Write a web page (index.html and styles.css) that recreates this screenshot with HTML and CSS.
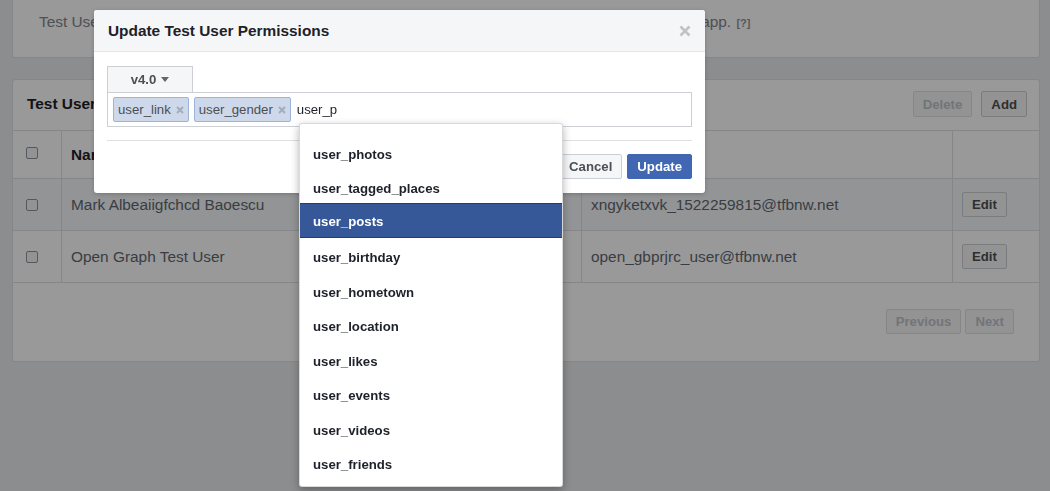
FILE: index.html
```html
<!DOCTYPE html>
<html lang="en">
<head>
<meta charset="utf-8">
<title>Test Users</title>
<link rel="stylesheet" href="styles.css">
</head>
<body>
<div class="page">
  <section class="card intro">
    <p class="intro-text">Test Users are special test accounts that are invisible to real people and can be used to test your app. <span class="help">[?]</span></p>
  </section>

  <section class="card users">
    <header class="users-head">
      <h2 class="users-title">Test Users</h2>
      <div class="users-actions">
        <button class="btn btn-tall btn-disabled">Delete</button>
        <button class="btn btn-tall">Add</button>
      </div>
    </header>
    <div class="grid">
      <div class="row row-head">
        <div class="cell cell-check"><span class="check"></span></div>
        <div class="cell">Name</div>
        <div class="cell">Email</div>
        <div class="cell"></div>
      </div>
      <div class="row row-alt">
        <div class="cell cell-check"><span class="check"></span></div>
        <div class="cell">Mark Albeaiigfchcd Baoescu</div>
        <div class="cell">xngyketxvk_1522259815@tfbnw.net</div>
        <div class="cell"><button class="btn">Edit</button></div>
      </div>
      <div class="row">
        <div class="cell cell-check"><span class="check"></span></div>
        <div class="cell">Open Graph Test User</div>
        <div class="cell">open_gbprjrc_user@tfbnw.net</div>
        <div class="cell"><button class="btn">Edit</button></div>
      </div>
    </div>
    <div class="pager">
      <button class="btn btn-disabled">Previous</button>
      <button class="btn btn-disabled">Next</button>
    </div>
  </section>
</div>

<div class="overlay"></div>

<div class="dialog">
  <div class="dialog-head">
    <h3 class="dialog-title">Update Test User Permissions</h3>
    <svg class="close" width="12" height="12" viewBox="0 0 12 12"><path d="M1.5 1.5L10.5 10.5M10.5 1.5L1.5 10.5" stroke="#bec2c9" stroke-width="2.6" stroke-linecap="butt"/></svg>
  </div>
  <div class="dialog-body">
    <div class="version">v4.0<span class="caret"></span></div>
    <div class="tokens">
      <span class="token">user_link<svg class="token-x" width="8" height="8" viewBox="0 0 8 8"><path d="M1 1L7 7M7 1L1 7" stroke="#a3acbb" stroke-width="2"/></svg></span>
      <span class="token">user_gender<svg class="token-x" width="8" height="8" viewBox="0 0 8 8"><path d="M1 1L7 7M7 1L1 7" stroke="#a3acbb" stroke-width="2"/></svg></span>
      <span class="typed">user_p</span>
      <ul class="suggest">
        <li class="suggest-item">user_photos</li>
        <li class="suggest-item">user_tagged_places</li>
        <li class="suggest-item is-active">user_posts</li>
        <li class="suggest-item">user_birthday</li>
        <li class="suggest-item">user_hometown</li>
        <li class="suggest-item">user_location</li>
        <li class="suggest-item">user_likes</li>
        <li class="suggest-item">user_events</li>
        <li class="suggest-item">user_videos</li>
        <li class="suggest-item">user_friends</li>
      </ul>
    </div>
    <div class="dialog-foot">
      <button class="btn">Cancel</button>
      <button class="btn btn-primary">Update</button>
    </div>
  </div>
</div>
</body>
</html>
```
FILE: styles.css
```css
* { box-sizing: border-box; }

html, body {
  margin: 0;
  height: 491px;
  overflow: hidden;
}

body {
  background: #e9ebee;
  font-family: "Liberation Sans", Arial, sans-serif;
  color: #1d2129;
}

.page {
  padding: 0 10px 0 12px;
}

.card {
  background: #fff;
  border: 1px solid #dddfe2;
  border-radius: 3px;
}

.intro {
  margin-top: -10px;
  padding: 21px 26px 24px;
}

.intro-text {
  margin: 0;
  font-size: 15.4px;
  line-height: 20px;
  color: #80858d;
  white-space: nowrap;
}

.help {
  margin-left: 1px;
  font-size: 11px;
  font-weight: bold;
  color: #90949c;
}

.users {
  margin-top: 21px;
}

.users-head {
  display: flex;
  align-items: center;
  justify-content: space-between;
  padding: 11px 12px 13px 14px;
  border-bottom: 1px solid #dddfe2;
}

.users-title {
  margin: 0;
  font-size: 15.4px;
  font-weight: bold;
  color: #1d2129;
}

.users-actions {
  display: flex;
  gap: 9px;
}

.btn {
  height: 25px;
  padding: 0 9px;
  border: 1px solid #ccd0d5;
  border-radius: 2px;
  background: #f5f6f7;
  color: #4b4f56;
  font-family: "Liberation Sans", Arial, sans-serif;
  font-size: 13.2px;
  font-weight: bold;
  line-height: 23px;
}

.btn-tall { height: 26px; }

.btn-disabled {
  color: #bec3c9;
  border-color: #dddfe2;
}

.btn-primary {
  background: #4267b2;
  border-color: #4267b2;
  color: #fff;
}

.row {
  display: grid;
  grid-template-columns: 48px 520px 371px 1fr;
  height: 52px;
  border-bottom: 1px solid #dddfe2;
  font-size: 15.4px;
  color: #606770;
}

.row-head {
  height: 48px;
  font-weight: bold;
  color: #1d2129;
}

.row-alt { background: #f6f7f9; }

.cell {
  display: flex;
  align-items: center;
  padding: 0 9px;
  border-left: 1px solid #dddfe2;
  white-space: nowrap;
}

.cell-check {
  border-left: none;
  padding-left: 13px;
}

.row-head .cell-check { padding-bottom: 3px; }

.check {
  width: 12px;
  height: 12px;
  border: 1px solid #8d949e;
  border-radius: 2px;
  background: #f5f6f7;
}

.pager {
  display: flex;
  justify-content: flex-end;
  gap: 4px;
  padding: 26px 25px 27px;
}

.overlay {
  position: fixed;
  inset: 0;
  background: rgba(0, 0, 0, 0.4);
}

.dialog {
  position: absolute;
  left: 94px;
  top: 10px;
  width: 611px;
  background: #fff;
  border-radius: 3px;
  box-shadow: 0 1px 4px rgba(0, 0, 0, 0.2);
}

.dialog-head {
  display: flex;
  align-items: center;
  justify-content: space-between;
  height: 42px;
  padding: 0 14px;
  background: #f5f6f7;
  border-bottom: 1px solid #e5e5e5;
  border-radius: 3px 3px 0 0;
}

.dialog-title {
  margin: 0;
  font-size: 15.4px;
  font-weight: bold;
  color: #1d2129;
}

.close { display: block; }

.dialog-body {
  padding: 14px 13px 14px 13px;
}

.version {
  display: flex;
  align-items: center;
  justify-content: center;
  width: 86px;
  height: 26px;
  border: 1px solid #ccd0d5;
  border-bottom: none;
  background: #f5f6f7;
  font-size: 13.2px;
  font-weight: bold;
  color: #4b4f56;
}

.caret {
  margin-left: 5px;
  border-left: 4.5px solid transparent;
  border-right: 4.5px solid transparent;
  border-top: 5px solid #606770;
}

.tokens {
  position: relative;
  display: flex;
  align-items: center;
  gap: 5px;
  height: 35px;
  padding: 0 5px;
  border: 1px solid #ccd0d5;
  font-size: 13.2px;
}

.token {
  display: flex;
  align-items: center;
  gap: 5px;
  height: 25px;
  padding: 0 4px;
  border: 1px solid #9cb4d8;
  border-radius: 2px;
  background: #cdd8eb;
  color: #4b4f56;
}

.token-x { display: block; }

.typed {
  margin-left: 1px;
  color: #1d2129;
}

.suggest {
  position: absolute;
  left: 191px;
  top: 30px;
  width: 264px;
  margin: 0;
  padding: 10px 0 7px;
  list-style: none;
  background: #fff;
  border: 1px solid rgba(0, 0, 0, 0.15);
  border-radius: 3px;
  box-shadow: 0 3px 8px rgba(0, 0, 0, 0.3);
  z-index: 2;
}

.suggest-item {
  display: flex;
  align-items: center;
  height: 34.5px;
  padding: 6px 13px 0;
  font-size: 13.2px;
  font-weight: bold;
  color: #1d2129;
}

.suggest-item.is-active {
  padding-top: 2px;
  background: #365899;
  color: #fff;
  border-top: 1px solid #243d6b;
  border-bottom: 1px solid #243d6b;
}

.dialog-foot {
  display: flex;
  justify-content: flex-end;
  gap: 5px;
  margin-top: 13px;
  padding-top: 13px;
  border-top: 1px solid #dddfe2;
}
```
